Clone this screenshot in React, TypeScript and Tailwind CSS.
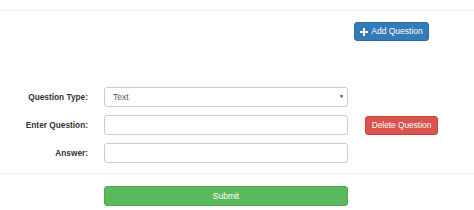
export default function App() {
  const rows = [
    { label: "Question Type:", kind: "select" },
    { label: "Enter Question:", kind: "input", del: true },
    { label: "Answer:", kind: "input" },
  ];

  return (
    <div className="h-[210px] w-[474px] overflow-hidden bg-white pt-[10px] font-['Liberation_Sans',Arial,sans-serif] text-[#333]">
      <div className="border-t border-[#eee]" />

      {/* Add question */}
      <div className="mt-[11px] flex justify-end pr-[45px]">
        <button className="flex h-[19px] w-[75px] items-center justify-center gap-[3px] rounded-[3px] border border-[#2e6da4] bg-[#337ab7] text-[8.5px] text-white">
          <svg width="8" height="8" viewBox="0 0 8 8">
            <path d="M3 0h2v3h3v2H5v3H3V5H0V3h3z" fill="#fff" />
          </svg>
          Add Question
        </button>
      </div>

      {/* Form */}
      <div className="mt-[46px] flex flex-col gap-[8px]">
        {rows.map((row) => (
          <div key={row.label} className="flex h-[20px] items-center">
            <label className="w-[88px] text-right text-[8.3px] font-bold">{row.label}</label>
            <div className="ml-[16px] flex h-[20px] w-[244px] items-center justify-between rounded-[3px] border border-[#ccc] bg-white px-[8px] text-[8.5px] text-[#555]">
              {row.kind === "select" && (
                <>
                  <span>Text</span>
                  <span className="-mr-[5px] text-[5px] text-[#333]">▼</span>
                </>
              )}
            </div>
            {row.del && (
              <button className="ml-[17px] flex h-[19px] w-[73px] items-center justify-center rounded-[3px] border border-[#d43f3a] bg-[#d9534f] text-[8.3px] text-white">
                Delete Question
              </button>
            )}
          </div>
        ))}
      </div>

      <div className="mt-[10px] border-t border-[#eee]" />

      <div className="mt-[12px] pl-[104px]">
        <button className="flex h-[20px] w-[244px] items-center justify-center rounded-[3px] border border-[#4cae4c] bg-[#5cb85c] text-[8.5px] text-white">
          Submit
        </button>
      </div>
    </div>
  );
}
